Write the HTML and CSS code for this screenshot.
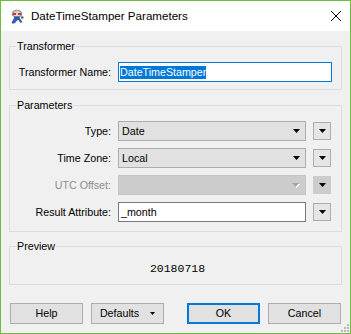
FILE: index.html
```html
<!DOCTYPE html>
<html>
<head>
<meta charset="utf-8">
<title>DateTimeStamper Parameters</title>
<link rel="stylesheet" href="styles.css">
</head>
<body>
<div class="window">
  <div class="titlebar">
    <svg class="app-icon" width="16" height="16" viewBox="0 0 16 16">
      <path d="M4 3.5 Q8 0.5 12 3.5 L12.5 7.5 L9.5 9 L6.5 9 L3.5 7.5 Z" fill="#d9d9d9" stroke="#7a7a7a" stroke-width="1"/>
      <rect x="4" y="5" width="3" height="2" fill="#d4302b"/>
      <rect x="9" y="5" width="3" height="2" fill="#d4302b"/>
      <rect x="7" y="2.5" width="2" height="2" fill="#f1c58a"/>
      <path d="M6 9 L10 9 L10.5 11 L8 12 L5.5 15 L3 15 L5 11 Z" fill="#2f62c8" stroke="#1d3f8a" stroke-width="0.8"/>
      <path d="M9.5 11.5 L11.5 14.5 L13 14 L11 11 Z" fill="#2f62c8" stroke="#1d3f8a" stroke-width="0.6"/>
      <rect x="12" y="8.5" width="2.5" height="2" fill="#555"/>
    </svg>
    <span class="title">DateTimeStamper Parameters</span>
    <svg class="close" width="12" height="12" viewBox="0 0 12 12">
      <path d="M1 1 L11 11 M11 1 L1 11" stroke="#000" stroke-width="1"/>
    </svg>
  </div>

  <div class="content">
    <fieldset class="group group-transformer">
      <legend>Transformer</legend>
      <div class="name-grid">
        <label class="lbl">Transformer Name:</label>
        <div class="textbox focused"><span class="sel">DateTimeStamper</span></div>
      </div>
    </fieldset>

    <fieldset class="group group-params">
      <legend>Parameters</legend>
      <div class="param-grid">
        <label class="lbl">Type:</label>
        <div class="combo"><span class="val">Date</span><svg class="arrow" width="7" height="4" viewBox="0 0 7 4"><path d="M0 0H7L3.5 4Z" fill="#000"/></svg></div>
        <div class="mini"><svg class="arrow" width="7" height="4" viewBox="0 0 7 4"><path d="M0 0H7L3.5 4Z" fill="#000"/></svg></div>

        <label class="lbl">Time Zone:</label>
        <div class="combo"><span class="val">Local</span><svg class="arrow" width="7" height="4" viewBox="0 0 7 4"><path d="M0 0H7L3.5 4Z" fill="#000"/></svg></div>
        <div class="mini"><svg class="arrow" width="7" height="4" viewBox="0 0 7 4"><path d="M0 0H7L3.5 4Z" fill="#000"/></svg></div>

        <label class="lbl disabled">UTC Offset:</label>
        <div class="combo combo-disabled"><span class="val"></span><svg class="arrow" width="8" height="5" viewBox="0 0 8 5"><path d="M1 1H8L4.5 5Z" fill="#ffffff"/><path d="M0 0H7L3.5 4Z" fill="#a3a3a3"/></svg></div>
        <div class="mini mini-disabled"><svg class="arrow" width="7" height="4" viewBox="0 0 7 4"><path d="M0 0H7L3.5 4Z" fill="#000"/></svg></div>

        <label class="lbl">Result Attribute:</label>
        <div class="textbox plain"><span class="val">_month</span></div>
        <div class="mini"><svg class="arrow" width="7" height="4" viewBox="0 0 7 4"><path d="M0 0H7L3.5 4Z" fill="#000"/></svg></div>
      </div>
    </fieldset>

    <fieldset class="group group-preview">
      <legend>Preview</legend>
      <div class="preview">20180718</div>
    </fieldset>

    <div class="buttons">
      <div class="btn">Help</div>
      <div class="btn btn-menu"><span>Defaults</span><svg width="5" height="3" viewBox="0 0 5 3"><path d="M0 0H5L2.5 3Z" fill="#000"/></svg></div>
      <div class="btn btn-default spacer">OK</div>
      <div class="btn">Cancel</div>
    </div>
  </div>

  <svg class="grip" width="9" height="9" viewBox="0 0 9 9">
    <rect x="6" y="0" width="2" height="2" fill="#b8b8b8"/>
    <rect x="3" y="3" width="2" height="2" fill="#b8b8b8"/>
    <rect x="6" y="3" width="2" height="2" fill="#b8b8b8"/>
    <rect x="0" y="6" width="2" height="2" fill="#b8b8b8"/>
    <rect x="3" y="6" width="2" height="2" fill="#b8b8b8"/>
    <rect x="6" y="6" width="2" height="2" fill="#b8b8b8"/>
  </svg>
</div>
</body>
</html>
```

FILE: styles.css
```css
* { box-sizing: border-box; }

html, body {
  margin: 0;
  padding: 0;
  background: #ffffff;
}

.window {
  position: relative;
  width: 351px;
  height: 334px;
  border: 1px solid #6dbf3b;
  background: #f0f0f0;
  font-family: "Liberation Sans", Arial, sans-serif;
  font-size: 10.7px;
  color: #000;
  display: flex;
  flex-direction: column;
}

.titlebar {
  height: 30px;
  background: #ffffff;
  display: flex;
  align-items: center;
  padding-left: 8px;
  flex: none;
}

.app-icon {
  display: block;
  flex: none;
}

.title {
  margin-left: 6px;
  font-size: 11.6px;
  color: #000;
  margin-top: -1px;
}

.close {
  margin-left: auto;
  margin-right: 8px;
  display: block;
}

.content {
  flex: 1;
  padding: 7px 8px 0 8px;
  display: flex;
  flex-direction: column;
}

.group {
  margin: 0;
  border: 1px solid #dcdcdc;
  padding: 8px 9px 7px 0;
  min-width: 0;
}

.group legend {
  margin-left: 6px;
  padding: 0 1px;
  line-height: 16px;
  font-size: 10.7px;
}

.group-params {
  margin-top: 7px;
  padding: 8px 10px 9px 0;
}

.group-preview {
  margin-top: 6px;
  padding: 7px 0 7px 0;
}

.name-grid {
  display: grid;
  grid-template-columns: 101px 1fr;
  column-gap: 7px;
  align-items: center;
}

.param-grid {
  display: grid;
  grid-template-columns: 101px 1fr 18px;
  column-gap: 7px;
  row-gap: 7px;
  align-items: center;
}

.lbl {
  text-align: right;
  white-space: nowrap;
  line-height: 20px;
}

.lbl.disabled {
  color: #8c8c8c;
}

.textbox {
  height: 20px;
  background: #ffffff;
  border: 1px solid #7a7a7a;
  display: flex;
  align-items: center;
  white-space: nowrap;
  overflow: hidden;
}

.textbox.focused {
  border-color: #0078d7;
  padding-left: 1px;
}

.textbox.plain {
  padding-left: 2px;
}

.sel {
  background: #0078d7;
  color: #ffffff;
  line-height: 13px;
  display: inline-block;
}

.combo {
  height: 20px;
  background: #e1e1e1;
  border: 1px solid #adadad;
  display: flex;
  align-items: center;
  padding: 0 5px 0 3px;
}

.combo .val {
  flex: 1;
}

.combo .arrow {
  display: block;
  flex: none;
}

.combo-disabled {
  background: #cccccc;
  border-color: #c4c4c4;
}

.mini {
  width: 18px;
  height: 18px;
  background: #e5e5e5;
  border: 1px solid #adadad;
  display: flex;
  align-items: center;
  justify-content: center;
}

.mini .arrow {
  display: block;
}

.mini-disabled {
  background: #cccccc;
  border-color: #cccccc;
}

.preview {
  text-align: center;
  font-family: "Liberation Mono", "Courier New", monospace;
  font-size: 11.5px;
  line-height: 16px;
  padding-left: 4px;
}

.buttons {
  margin-top: 18px;
  padding: 0 1px;
  display: flex;
}

.btn {
  width: 73px;
  height: 21px;
  background: #e1e1e1;
  border: 1px solid #adadad;
  display: flex;
  align-items: center;
  justify-content: center;
  margin-right: 8px;
  line-height: 1;
}

.btn:last-child {
  margin-right: 0;
}

.btn-menu {
  gap: 11px;
  margin-right: 23px;
}

.btn-menu svg {
  display: block;
}

.btn-default {
  border: 2px solid #0078d7;
}

.grip {
  position: absolute;
  right: 0;
  bottom: 0;
  display: block;
}
```
